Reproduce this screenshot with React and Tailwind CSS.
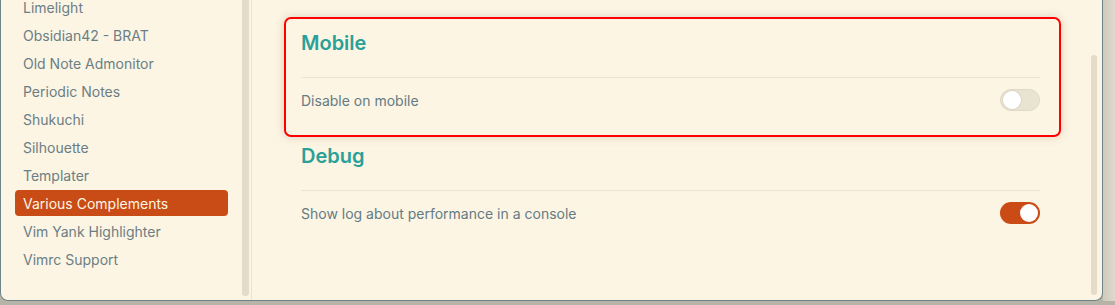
import React from 'react';

const plugins = [
  'Limelight',
  'Obsidian42 - BRAT',
  'Old Note Admonitor',
  'Periodic Notes',
  'Shukuchi',
  'Silhouette',
  'Templater',
  'Various Complements',
  'Vim Yank Highlighter',
  'Vimrc Support',
];

function Toggle({ on }) {
  return (
    <div
      className={`w-[40px] h-[22px] rounded-full p-[2px] flex items-center ${
        on ? 'bg-[#cb4b16] justify-end' : 'bg-[#e9e3d1] border border-[#e0d9c6] justify-start'
      }`}
    >
      <div className={`w-[18px] h-[18px] rounded-full bg-white ${on ? '' : 'shadow-[0_0_0_1px_#ddd6c3]'}`} />
    </div>
  );
}

function Setting({ label, on }) {
  return (
    <div className="border-t border-[#ece4d0] pt-[11px] pb-[11px] flex items-center justify-between">
      <span className="text-[14px] text-[#657b83]">{label}</span>
      <Toggle on={on} />
    </div>
  );
}

function Heading({ children }) {
  return (
    <div className="h-[24px] leading-[24px] text-[20px] font-semibold text-[#2aa198] mb-[22px]">
      {children}
    </div>
  );
}

export default function App() {
  return (
    <div
      className="w-[1115px] h-[305px] bg-[#b8b3a7] overflow-hidden"
      style={{ fontFamily: 'Inter, "Noto Sans", sans-serif' }}
    >
      <div className="flex h-[301px]">
        <div className="w-[1103px] h-[301px] flex bg-[#fcf5e3] border-l border-r border-b border-[#6e8389] rounded-bl-[8px] rounded-br-[8px] overflow-hidden">
          {/* sidebar */}
          <div className="w-[251px] flex border-r border-[#ece3cc]">
            <div className="flex-1 pl-[14px] mt-[-6px]">
              {plugins.map((p) => (
                <div
                  key={p}
                  className={`w-[213px] h-[26px] mb-[2px] rounded-[4px] pl-[8px] flex items-center text-[14px] ${
                    p === 'Various Complements' ? 'bg-[#c94b16] text-[#fdf6e3]' : 'text-[#6b7e85]'
                  }`}
                >
                  {p}
                </div>
              ))}
            </div>
            <div className="w-[7px] mr-[2px] mb-[4px] rounded-b-[3px] bg-[#e4dcc8]" />
          </div>

          {/* content */}
          <div className="flex-1 flex">
            <div className="flex-1 pl-[32px] pr-[30px] pt-[17px]">
              <div className="border-2 border-[#ff0000] rounded-[7px] pl-[15px] pr-[19px] pt-[12px] pb-[13px] shadow-[0_0_8px_rgba(120,100,60,0.25)]">
                <Heading>Mobile</Heading>
                <Setting label="Disable on mobile" on={false} />
              </div>
              <div className="ml-[17px] mr-[21px] mt-[7px]">
                <Heading>Debug</Heading>
                <Setting label="Show log about performance in a console" on={true} />
              </div>
            </div>
            <div className="w-[6px] mt-[55px] mb-[5px] mr-[5px] rounded-[3px] bg-[#e4dcc8]" />
          </div>
        </div>
        <div className="flex-1 bg-gradient-to-r from-[#cfcabc] to-[#dedacd]" />
      </div>
    </div>
  );
}
